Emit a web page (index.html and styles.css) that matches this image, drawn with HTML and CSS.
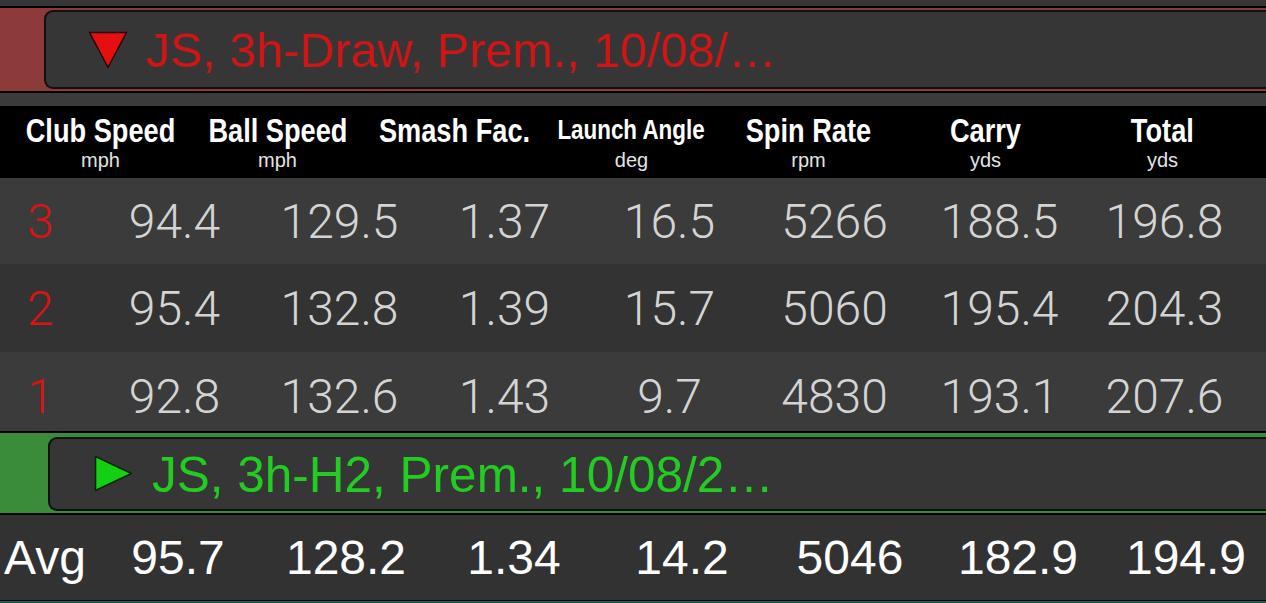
FILE: index.html
```html
<!DOCTYPE html>
<html lang="en">
<head>
    <meta charset="UTF-8">
    <meta name="viewport" content="width=device-width, initial-scale=1.0">
    <title>Shot Groups</title>
    <link rel="stylesheet" href="styles.css">
</head>
<body>
    <div class="screen">
        <div class="top-gap"></div>

        <div class="group group-red">
            <div class="title-box">
                <svg class="arrow" width="40" height="38" viewBox="0 0 40 38">
                    <polygon points="1.5,1.5 38.5,1.5 20,36.5" fill="#e40f0f" stroke="#2a0505" stroke-width="1.6" stroke-linejoin="round"/>
                </svg>
                <span class="title">JS, 3h-Draw, Prem., 10/08/…</span>
            </div>
        </div>

        <div class="spacer"></div>

        <div class="col-head">
            <div class="head-cell"><span class="name">Club Speed</span><span class="unit">mph</span></div>
            <div class="head-cell"><span class="name">Ball Speed</span><span class="unit">mph</span></div>
            <div class="head-cell"><span class="name">Smash Fac.</span><span class="unit">&nbsp;</span></div>
            <div class="head-cell"><span class="name small">Launch Angle</span><span class="unit">deg</span></div>
            <div class="head-cell"><span class="name">Spin Rate</span><span class="unit">rpm</span></div>
            <div class="head-cell"><span class="name">Carry</span><span class="unit">yds</span></div>
            <div class="head-cell"><span class="name">Total</span><span class="unit">yds</span></div>
        </div>

        <div class="shots">
            <div class="shot light first">
                <span class="num">3</span>
                <span>94.4</span><span>129.5</span><span>1.37</span><span>16.5</span><span>5266</span><span>188.5</span><span>196.8</span>
            </div>
            <div class="shot dark">
                <span class="num">2</span>
                <span>95.4</span><span>132.8</span><span>1.39</span><span>15.7</span><span>5060</span><span>195.4</span><span>204.3</span>
            </div>
            <div class="shot light">
                <span class="num">1</span>
                <span>92.8</span><span>132.6</span><span>1.43</span><span>9.7</span><span>4830</span><span>193.1</span><span>207.6</span>
            </div>
        </div>

        <div class="group group-green">
            <div class="title-box">
                <svg class="arrow" width="40" height="38" viewBox="0 0 40 38">
                    <polygon points="1.5,1.5 37.5,18.5 1.5,35.5" fill="#13d013" stroke="#062806" stroke-width="1.6" stroke-linejoin="round"/>
                </svg>
                <span class="title">JS, 3h-H2, Prem., 10/08/2…</span>
            </div>
        </div>

        <div class="avg">
            <span class="label">Avg</span>
            <span>95.7</span><span>128.2</span><span>1.34</span><span>14.2</span><span>5046</span><span>182.9</span><span>194.9</span>
        </div>
    </div>
</body>
</html>
```

FILE: styles.css
```css
body {
    margin: 0;
    background-color: #333;
    font-family: 'Liberation Sans', Arial, sans-serif;
    overflow: hidden;
}
.screen {
    width: 1266px;
    height: 603px;
    overflow: hidden;
    display: flex;
    flex-direction: column;
}
.top-gap {
    height: 6px;
    background-color: #353535;
}

/* group title bars */
.group {
    border-top: 2px solid #000;
    border-bottom: 2px solid #000;
}
.group-red {
    background-color: #8c3a3a;
    padding: 2px 0 2px 44px;
}
.group-green {
    background-color: #3a8b3a;
    padding: 4px 0 2px 48px;
}
.title-box {
    display: flex;
    align-items: center;
    background-color: #363636;
    border: 2px solid #111;
    border-right: none;
    border-radius: 9px 0 0 9px;
}
.group-red .title-box {
    height: 75px;
    padding-left: 42px;
}
.group-green .title-box {
    height: 70px;
    padding-left: 44px;
}
.arrow {
    flex-shrink: 0;
    margin-right: 18px;
}
.title {
    font-size: 48.5px;
    white-space: nowrap;
}
.group-red .title {
    color: #cf1515;
}
.group-green .title {
    color: #22cc22;
    font-size: 49.5px;
}

.spacer {
    height: 13px;
    background-color: #3b3b3b;
}

/* column headings */
.col-head {
    height: 72px;
    background-color: #000;
    display: grid;
    grid-template-columns: repeat(7, 177px);
    padding-left: 12px;
    color: #fff;
}
.head-cell {
    display: flex;
    flex-direction: column;
    align-items: center;
    padding-top: 6px;
    white-space: nowrap;
}
.name {
    font-weight: bold;
    font-size: 34px;
    line-height: 36px;
    transform: scaleX(0.8);
}
.name.small {
    font-size: 28px;
}
.unit {
    font-size: 20px;
    line-height: 24px;
    color: #e4e4e4;
}

/* shot rows */
.shots {
    height: 253px;
    overflow: hidden;
}
.shot {
    height: 88px;
    display: grid;
    grid-template-columns: 92px repeat(7, 165px);
    align-items: center;
    font-family: Roboto, 'Liberation Sans', sans-serif;
    font-weight: 300;
    font-size: 48px;
    color: #d4d4d4;
    text-align: center;
}
.shot.first {
    height: 86px;
}
.shot.light {
    background-color: #3b3b3b;
}
.shot.dark {
    background-color: #333;
}
.shot .num {
    color: #d81414;
    text-align: left;
    padding-left: 27px;
}

/* average row */
.avg {
    height: 85px;
    display: grid;
    grid-template-columns: 94px repeat(7, 168px);
    align-items: center;
    background-color: #323232;
    border-bottom: 1px solid #000;
    font-size: 48px;
    color: #fff;
    text-align: center;
}
.avg .label {
    text-align: left;
    padding-left: 4px;
}
.screen::after {
    content: '';
    display: block;
    height: 2px;
    background-color: #1d5a56;
}
```
